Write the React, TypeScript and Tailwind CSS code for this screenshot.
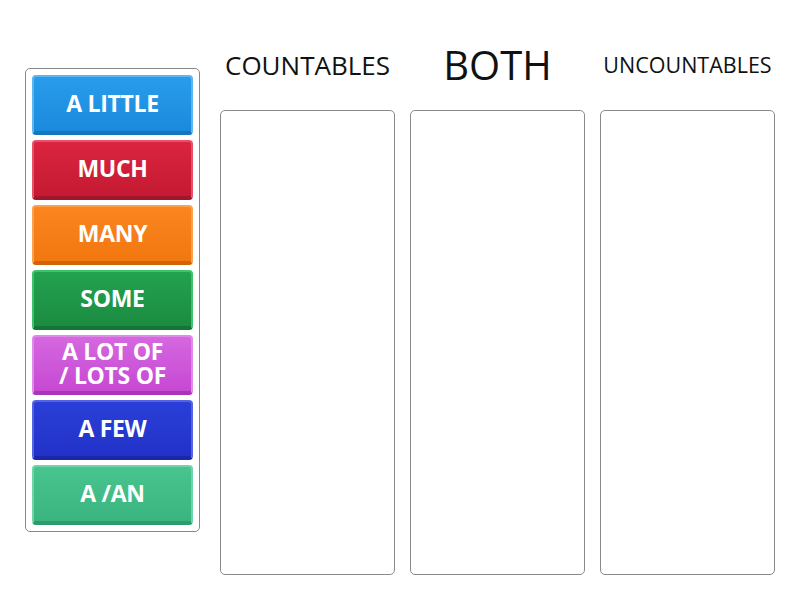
const tiles = [
  { label: "A LITTLE", cls: "bg-gradient-to-b from-[#2a9cec] to-[#1a8bdc] border-[#5cb6f0] border-b-[#1676bd]" },
  { label: "MUCH", cls: "bg-gradient-to-b from-[#dc2440] to-[#c41a32] border-[#e65268] border-b-[#a2162b]" },
  { label: "MANY", cls: "bg-gradient-to-b from-[#fb8520] to-[#f2770e] border-[#fca150] border-b-[#d2630a]" },
  { label: "SOME", cls: "bg-gradient-to-b from-[#23a24f] to-[#1b8c42] border-[#3cc46a] border-b-[#157336]" },
  { label: "A LOT OF\n/ LOTS OF", cls: "bg-gradient-to-b from-[#d567e0] to-[#c648d3] border-[#e08ae8] border-b-[#aa34b8]" },
  { label: "A FEW", cls: "bg-gradient-to-b from-[#2a3fd8] to-[#2232c8] border-[#5565e2] border-b-[#1a27a6]" },
  { label: "A /AN", cls: "bg-gradient-to-b from-[#48c48e] to-[#3bb57f] border-[#6fd4a8] border-b-[#2f9a6b]" },
];

const columns = [
  { title: "COUNTABLES", cls: "text-[26px]" },
  { title: "BOTH", cls: "text-[40px]" },
  { title: "UNCOUNTABLES", cls: "text-[21.5px]" },
];

export default function App() {
  return (
    <div className="w-[800px] h-[600px] bg-white flex font-['Open_Sans',sans-serif]">
      <div className="pl-[25px] pt-[68px]">
        <div className="w-[175px] h-[464px] border border-[#8a8a8a] rounded-[5px] flex flex-col gap-[5px] px-[6px] pt-[6px]">
          {tiles.map((t) => (
            <div
              key={t.label}
              className={`h-[60px] rounded-[4px] border-x-2 border-t-2 border-b-4 flex items-center justify-center pb-[3px] text-white font-bold text-[23px] leading-[24px] tracking-[-0.3px] text-center whitespace-pre-line ${t.cls}`}
            >
              {t.label}
            </div>
          ))}
        </div>
      </div>
      <div className="pl-[20px] flex gap-[15px]">
        {columns.map((c) => (
          <div key={c.title} className="w-[175px] flex flex-col">
            <div className="h-[110px] flex items-center justify-center pt-[20px]">
              <span className={`text-[#111] whitespace-nowrap ${c.cls}`}>{c.title}</span>
            </div>
            <div className="h-[465px] border border-[#8a8a8a] rounded-[5px]" />
          </div>
        ))}
      </div>
    </div>
  );
}
